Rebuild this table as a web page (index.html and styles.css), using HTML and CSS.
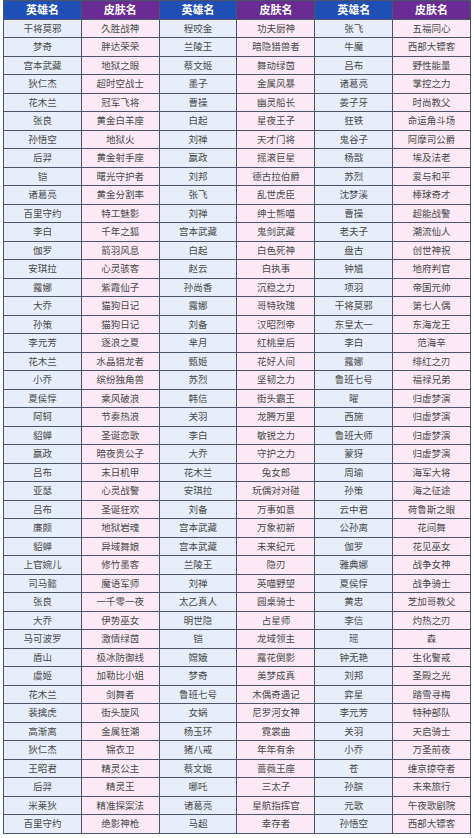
FILE: index.html
```html
<!DOCTYPE html>
<html lang="zh">
<head>
<meta charset="utf-8">
<title>皮肤表</title>
<link rel="stylesheet" href="styles.css">
</head>
<body>
<table class="skins">
<thead>
<tr><th class="h">英雄名</th><th class="s">皮肤名</th><th class="h">英雄名</th><th class="s">皮肤名</th><th class="h">英雄名</th><th class="s">皮肤名</th></tr>
</thead>
<tbody>
<tr><td class="h">干将莫邪</td><td class="s">久胜战神</td><td class="h">程咬金</td><td class="s">功夫厨神</td><td class="h">张飞</td><td class="s">五福同心</td></tr>
<tr><td class="h">梦奇</td><td class="s">胖达荣荣</td><td class="h">兰陵王</td><td class="s">暗隐猎兽者</td><td class="h">牛魔</td><td class="s">西部大镖客</td></tr>
<tr><td class="h">宫本武藏</td><td class="s">地狱之眼</td><td class="h">蔡文姬</td><td class="s">舞动绿茵</td><td class="h">吕布</td><td class="s">野性能量</td></tr>
<tr><td class="h">狄仁杰</td><td class="s">超时空战士</td><td class="h">墨子</td><td class="s">金属风暴</td><td class="h">诸葛亮</td><td class="s">掌控之力</td></tr>
<tr><td class="h">花木兰</td><td class="s">冠军飞将</td><td class="h">曹操</td><td class="s">幽灵船长</td><td class="h">姜子牙</td><td class="s">时尚教父</td></tr>
<tr><td class="h">张良</td><td class="s">黄金白羊座</td><td class="h">白起</td><td class="s">星夜王子</td><td class="h">狂铁</td><td class="s">命运角斗场</td></tr>
<tr><td class="h">孙悟空</td><td class="s">地狱火</td><td class="h">刘禅</td><td class="s">天才门将</td><td class="h">鬼谷子</td><td class="s">阿摩司公爵</td></tr>
<tr><td class="h">后羿</td><td class="s">黄金射手座</td><td class="h">嬴政</td><td class="s">摇滚巨星</td><td class="h">杨戬</td><td class="s">埃及法老</td></tr>
<tr><td class="h">铠</td><td class="s">曙光守护者</td><td class="h">刘邦</td><td class="s">德古拉伯爵</td><td class="h">苏烈</td><td class="s">爱与和平</td></tr>
<tr><td class="h">诸葛亮</td><td class="s">黄金分割率</td><td class="h">张飞</td><td class="s">乱世虎臣</td><td class="h">沈梦溪</td><td class="s">棒球奇才</td></tr>
<tr><td class="h">百里守约</td><td class="s">特工魅影</td><td class="h">刘禅</td><td class="s">绅士熊喵</td><td class="h">曹操</td><td class="s">超能战警</td></tr>
<tr><td class="h">李白</td><td class="s">千年之狐</td><td class="h">宫本武藏</td><td class="s">鬼剑武藏</td><td class="h">老夫子</td><td class="s">潮流仙人</td></tr>
<tr><td class="h">伽罗</td><td class="s">箭羽风息</td><td class="h">白起</td><td class="s">白色死神</td><td class="h">盘古</td><td class="s">创世神祝</td></tr>
<tr><td class="h">安琪拉</td><td class="s">心灵骇客</td><td class="h">赵云</td><td class="s">白执事</td><td class="h">钟馗</td><td class="s">地府判官</td></tr>
<tr><td class="h">露娜</td><td class="s">紫霞仙子</td><td class="h">孙尚香</td><td class="s">沉稳之力</td><td class="h">项羽</td><td class="s">帝国元帅</td></tr>
<tr><td class="h">大乔</td><td class="s">猫狗日记</td><td class="h">露娜</td><td class="s">哥特玫瑰</td><td class="h">干将莫邪</td><td class="s">第七人偶</td></tr>
<tr><td class="h">孙策</td><td class="s">猫狗日记</td><td class="h">刘备</td><td class="s">汉昭烈帝</td><td class="h">东皇太一</td><td class="s">东海龙王</td></tr>
<tr><td class="h">李元芳</td><td class="s">逐浪之夏</td><td class="h">芈月</td><td class="s">红桃皇后</td><td class="h">李白</td><td class="s">范海辛</td></tr>
<tr><td class="h">花木兰</td><td class="s">水晶猎龙者</td><td class="h">甄姬</td><td class="s">花好人间</td><td class="h">露娜</td><td class="s">绯红之刃</td></tr>
<tr><td class="h">小乔</td><td class="s">缤纷独角兽</td><td class="h">苏烈</td><td class="s">坚韧之力</td><td class="h">鲁班七号</td><td class="s">福禄兄弟</td></tr>
<tr><td class="h">夏侯惇</td><td class="s">乘风破浪</td><td class="h">韩信</td><td class="s">街头霸王</td><td class="h">曜</td><td class="s">归虚梦演</td></tr>
<tr><td class="h">阿轲</td><td class="s">节奏热浪</td><td class="h">关羽</td><td class="s">龙腾万里</td><td class="h">西施</td><td class="s">归虚梦演</td></tr>
<tr><td class="h">貂蝉</td><td class="s">圣诞恋歌</td><td class="h">李白</td><td class="s">敏锐之力</td><td class="h">鲁班大师</td><td class="s">归虚梦演</td></tr>
<tr><td class="h">嬴政</td><td class="s">暗夜贵公子</td><td class="h">大乔</td><td class="s">守护之力</td><td class="h">蒙犽</td><td class="s">归虚梦演</td></tr>
<tr><td class="h">吕布</td><td class="s">末日机甲</td><td class="h">花木兰</td><td class="s">兔女郎</td><td class="h">周瑜</td><td class="s">海军大将</td></tr>
<tr><td class="h">亚瑟</td><td class="s">心灵战警</td><td class="h">安琪拉</td><td class="s">玩偶对对碰</td><td class="h">孙策</td><td class="s">海之征途</td></tr>
<tr><td class="h">吕布</td><td class="s">圣诞狂欢</td><td class="h">刘备</td><td class="s">万事如意</td><td class="h">云中君</td><td class="s">荷鲁斯之眼</td></tr>
<tr><td class="h">廉颇</td><td class="s">地狱岩魂</td><td class="h">宫本武藏</td><td class="s">万象初新</td><td class="h">公孙离</td><td class="s">花间舞</td></tr>
<tr><td class="h">貂蝉</td><td class="s">异域舞娘</td><td class="h">宫本武藏</td><td class="s">未来纪元</td><td class="h">伽罗</td><td class="s">花见巫女</td></tr>
<tr><td class="h">上官婉儿</td><td class="s">修竹墨客</td><td class="h">兰陵王</td><td class="s">隐刃</td><td class="h">雅典娜</td><td class="s">战争女神</td></tr>
<tr><td class="h">司马懿</td><td class="s">魔语军师</td><td class="h">刘禅</td><td class="s">英喵野望</td><td class="h">夏侯惇</td><td class="s">战争骑士</td></tr>
<tr><td class="h">张良</td><td class="s">一千零一夜</td><td class="h">太乙真人</td><td class="s">圆桌骑士</td><td class="h">黄忠</td><td class="s">芝加哥教父</td></tr>
<tr><td class="h">大乔</td><td class="s">伊势巫女</td><td class="h">明世隐</td><td class="s">占星师</td><td class="h">李信</td><td class="s">灼热之刃</td></tr>
<tr><td class="h">马可波罗</td><td class="s">激情绿茵</td><td class="h">铠</td><td class="s">龙域领主</td><td class="h">瑶</td><td class="s">森</td></tr>
<tr><td class="h">盾山</td><td class="s">极冰防御线</td><td class="h">嫦娥</td><td class="s">露花倒影</td><td class="h">钟无艳</td><td class="s">生化警戒</td></tr>
<tr><td class="h">虞姬</td><td class="s">加勒比小姐</td><td class="h">梦奇</td><td class="s">美梦成真</td><td class="h">刘邦</td><td class="s">圣殿之光</td></tr>
<tr><td class="h">花木兰</td><td class="s">剑舞者</td><td class="h">鲁班七号</td><td class="s">木偶奇遇记</td><td class="h">弈星</td><td class="s">踏雪寻梅</td></tr>
<tr><td class="h">裴擒虎</td><td class="s">街头旋风</td><td class="h">女娲</td><td class="s">尼罗河女神</td><td class="h">李元芳</td><td class="s">特种部队</td></tr>
<tr><td class="h">高渐离</td><td class="s">金属狂潮</td><td class="h">杨玉环</td><td class="s">霓裳曲</td><td class="h">关羽</td><td class="s">天启骑士</td></tr>
<tr><td class="h">狄仁杰</td><td class="s">锦衣卫</td><td class="h">猪八戒</td><td class="s">年年有余</td><td class="h">小乔</td><td class="s">万圣前夜</td></tr>
<tr><td class="h">王昭君</td><td class="s">精灵公主</td><td class="h">蔡文姬</td><td class="s">蔷薇王座</td><td class="h">苍</td><td class="s">维京掠夺者</td></tr>
<tr><td class="h">后羿</td><td class="s">精灵王</td><td class="h">哪吒</td><td class="s">三太子</td><td class="h">孙膑</td><td class="s">未来旅行</td></tr>
<tr><td class="h">米莱狄</td><td class="s">精准探案法</td><td class="h">诸葛亮</td><td class="s">星航指挥官</td><td class="h">元歌</td><td class="s">午夜歌剧院</td></tr>
<tr><td class="h">百里守约</td><td class="s">绝影神枪</td><td class="h">马超</td><td class="s">幸存者</td><td class="h">孙悟空</td><td class="s">西部大镖客</td></tr>
</tbody>
</table>
</body>
</html>
```

FILE: styles.css
```css
html, body {
  margin: 0;
  padding: 0;
  background: #ffffff;
}

body {
  font-family: "Noto Sans CJK SC", "Noto Sans", sans-serif;
}

.skins {
  margin: 0 0 0 3px;
  width: 468px;
  border-collapse: collapse;
  table-layout: fixed;
}

.skins th,
.skins td {
  height: 17.5px;
  padding: 0;
  border: 1px solid #4b5468;
  text-align: center;
  vertical-align: middle;
  line-height: 1;
  white-space: nowrap;
  overflow: hidden;
}

.skins th {
  color: #ffffff;
  font-weight: 700;
  font-size: 11px;
}

.skins th.h {
  background: #1f4fb4;
}

.skins th.s {
  background: #6a2b95;
}

.skins td {
  color: #4a4a4a;
  font-size: 9.5px;
}

.skins td.h {
  background: #e7eefa;
}

.skins td.s {
  background: #fbeaf6;
}
```
